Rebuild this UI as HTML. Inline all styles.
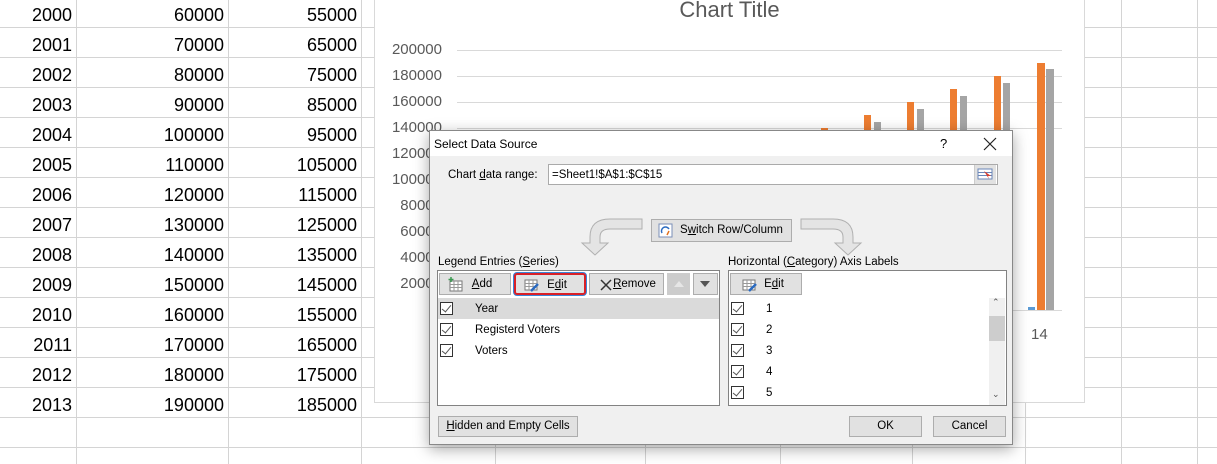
<!DOCTYPE html>
<html><head><style>
*{box-sizing:border-box;margin:0;padding:0}
body{width:1217px;height:464px;overflow:hidden;background:#fff;position:relative;font-family:"Liberation Sans",sans-serif}
.a{position:absolute}
.hl{position:absolute;height:1px;background:#d4d4d4}
.vl{position:absolute;width:1px;background:#d4d4d4}
.num{position:absolute;font-size:18px;color:#000;text-align:right;line-height:30px}
.dlg{font-size:11.5px;color:#000}
.btn{position:absolute;background:#e1e1e1;border:1px solid #adadad;font-size:11.5px;text-align:center;line-height:19px}
.cb{position:absolute;width:13px;height:13px;border:1px solid #333;background:#fff}
.cb:after{content:"";position:absolute;left:3px;top:0px;width:4px;height:8px;border-right:1.5px solid #555;border-bottom:1.5px solid #555;transform:rotate(40deg)}
.yl{position:absolute;font-size:15px;color:#595959;text-align:right;width:60px;left:382px}
</style></head><body>
<div class="hl" style="left:0;top:27px;width:1217px"></div>
<div class="hl" style="left:0;top:57px;width:1217px"></div>
<div class="hl" style="left:0;top:87px;width:1217px"></div>
<div class="hl" style="left:0;top:117px;width:1217px"></div>
<div class="hl" style="left:0;top:147px;width:1217px"></div>
<div class="hl" style="left:0;top:177px;width:1217px"></div>
<div class="hl" style="left:0;top:207px;width:1217px"></div>
<div class="hl" style="left:0;top:237px;width:1217px"></div>
<div class="hl" style="left:0;top:267px;width:1217px"></div>
<div class="hl" style="left:0;top:297px;width:1217px"></div>
<div class="hl" style="left:0;top:327px;width:1217px"></div>
<div class="hl" style="left:0;top:357px;width:1217px"></div>
<div class="hl" style="left:0;top:387px;width:1217px"></div>
<div class="hl" style="left:0;top:417px;width:1217px"></div>
<div class="hl" style="left:0;top:447px;width:1217px"></div>
<div class="vl" style="left:76px;top:0;height:464px"></div>
<div class="vl" style="left:228px;top:0;height:464px"></div>
<div class="vl" style="left:361px;top:0;height:464px"></div>
<div class="vl" style="left:495px;top:0;height:464px"></div>
<div class="vl" style="left:645px;top:0;height:464px"></div>
<div class="vl" style="left:780px;top:0;height:464px"></div>
<div class="vl" style="left:912px;top:0;height:464px"></div>
<div class="vl" style="left:1025px;top:0;height:464px"></div>
<div class="vl" style="left:1121px;top:0;height:464px"></div>
<div class="vl" style="left:1197px;top:0;height:464px"></div>
<div class="num" style="left:0;top:0;width:72px">2000<br>2001<br>2002<br>2003<br>2004<br>2005<br>2006<br>2007<br>2008<br>2009<br>2010<br>2011<br>2012<br>2013</div>
<div class="num" style="left:80px;top:0;width:144px">60000<br>70000<br>80000<br>90000<br>100000<br>110000<br>120000<br>130000<br>140000<br>150000<br>160000<br>170000<br>180000<br>190000</div>
<div class="num" style="left:232px;top:0;width:125px">55000<br>65000<br>75000<br>85000<br>95000<br>105000<br>115000<br>125000<br>135000<br>145000<br>155000<br>165000<br>175000<br>185000</div>
<div class="a" style="left:374px;top:-1px;width:711px;height:404px;background:#fff;border:1px solid #d9d9d9"></div>
<div class="a" style="left:374px;top:-3px;width:711px;text-align:center;font-size:22px;color:#595959">Chart Title</div>
<svg class="a" style="left:0;top:0" width="1217" height="464">
<g stroke="#d9d9d9" stroke-width="1">
<line x1="457" x2="1062" y1="50.5" y2="50.5"/><line x1="457" x2="1062" y1="76.5" y2="76.5"/><line x1="457" x2="1062" y1="102.5" y2="102.5"/><line x1="457" x2="1062" y1="128.5" y2="128.5"/>
<line x1="457" x2="1062" y1="310.5" y2="310.5"/></g>
<g fill="#ed7d31"><rect x="821" y="128" width="7" height="182"/><rect x="864" y="115" width="7" height="195"/><rect x="907" y="102" width="7" height="208"/><rect x="950" y="89" width="7" height="221"/><rect x="994" y="76" width="7" height="234"/><rect x="1037" y="63" width="8" height="247"/></g>
<g fill="#a5a5a5"><rect x="874" y="122" width="7" height="188"/><rect x="917" y="109" width="7" height="201"/><rect x="960" y="96" width="7" height="214"/><rect x="1003" y="83" width="7" height="227"/><rect x="1046" y="69" width="8" height="241"/></g>
<rect x="1028" y="307" width="7" height="3" fill="#5b9bd5"/>
</svg>
<div class="yl" style="top:41px">200000</div>
<div class="yl" style="top:67px">180000</div>
<div class="yl" style="top:93px">160000</div>
<div class="yl" style="top:119px">140000</div>
<div class="yl" style="top:145px">120000</div>
<div class="yl" style="top:171px">100000</div>
<div class="yl" style="top:197px">80000</div>
<div class="yl" style="top:223px">60000</div>
<div class="yl" style="top:249px">40000</div>
<div class="yl" style="top:275px">20000</div>
<div class="a" style="left:1031px;top:326px;font-size:15px;color:#595959">14</div>
<div class="a dlg" style="left:429px;top:130px;width:584px;height:315px;background:#f0f0f0;border:1px solid #888;box-shadow:0 4px 14px rgba(0,0,0,.35)">
<div class="a" style="left:0;top:0;width:582px;height:25px;background:#fff"></div>
<div class="a" style="left:4px;top:6px;font-size:12px">Select Data Source</div>
<div class="a" style="left:510px;top:5px;font-size:13px">?</div>
<svg class="a" style="left:553px;top:6px" width="14" height="14"><path d="M1 1L13 13M13 1L1 13" stroke="#222" stroke-width="1.2"/></svg>
<div class="a" style="left:18px;top:38px">Chart <u>d</u>ata range:</div>
<div class="a" style="left:118px;top:33px;width:450px;height:21px;background:#fff;border:1px solid #aaa"></div>
<div class="a" style="left:122px;top:38px">=Sheet1!$A$1:$C$15</div>
<div class="a" style="left:544px;top:34px;width:22px;height:19px;background:#e1e1e1;border-left:1px solid #ccc"><svg width="20" height="18"><rect x="3" y="4" width="14" height="10" fill="#fff" stroke="#6a86b8"/><line x1="3" y1="7.5" x2="17" y2="7.5" stroke="#6a86b8"/><line x1="3" y1="10.5" x2="17" y2="10.5" stroke="#6a86b8"/><path d="M9 6l7 5-3 0 1 3z" fill="#d83b2c"/></svg></div>
<svg class="a" style="left:150px;top:86px" width="290" height="40"><path d="M62 2H30Q10 2 10 20V26H2L15 38L28 26H20V20Q20 12 30 12H62Z" fill="#e4e4e4" stroke="#b0b0b0"/><path d="M221 2H253Q273 2 273 20V26H281L268 38L255 26H263V20Q263 12 253 12H221Z" fill="#e4e4e4" stroke="#b0b0b0"/></svg>
<div class="btn" style="left:221px;top:88px;width:141px;height:23px;line-height:21px;padding-left:20px">S<u>w</u>itch Row/Column</div>
<svg class="a" style="left:228px;top:92px" width="16" height="16"><rect x="1" y="1" width="13" height="13" fill="#fff" stroke="#7a8fb8"/><path d="M4 10A4 4 0 0 1 11 6" stroke="#2a6ac0" fill="none" stroke-width="1.5"/><path d="M11 8l-2 4" stroke="#e07020" stroke-width="1.5"/></svg>
<div class="a" style="left:8px;top:125px">Legend Entries (<u>S</u>eries)</div>
<div class="a" style="left:298px;top:125px">Horizontal (<u>C</u>ategory) Axis Labels</div>
<div class="a" style="left:7px;top:139px;width:283px;height:136px;background:#fff;border:1px solid #828282"></div>
<div class="a" style="left:298px;top:139px;width:279px;height:136px;background:#fff;border:1px solid #828282"></div>
<div class="btn" style="left:9px;top:142px;width:72px;height:22px;line-height:20px;padding-left:14px"><u>A</u>dd</div>
<div class="btn" style="left:84px;top:142px;width:72px;height:22px;line-height:20px;padding-left:14px;border:2px solid #d92027;border-radius:3px;box-shadow:0 0 0 1px #3a86d8">E<u>d</u>it</div>
<div class="btn" style="left:159px;top:142px;width:75px;height:22px;line-height:20px;padding-left:16px"><u>R</u>emove</div>
<div class="btn" style="left:237px;top:142px;width:23px;height:22px;background:#ccc;border-color:#ccc"></div>
<div class="btn" style="left:263px;top:142px;width:25px;height:22px"></div>
<svg class="a" style="left:18px;top:145px" width="180" height="18"><rect x="2" y="5" width="12" height="10" fill="#fff" stroke="#777"/><path d="M2 8.5H14M2 11.5H14M6 5V15M10 5V15" stroke="#999"/><path d="M3 1V6M0.5 3.5H5.5" stroke="#3a9a50" stroke-width="1.5"/>
<g transform="translate(75 0)"><rect x="2" y="4" width="12" height="10" fill="#fff" stroke="#777"/><path d="M2 7.5H14M2 10.5H14M6 4V14M10 4V14" stroke="#999"/><path d="M8 15L15 8" stroke="#2a6ac0" stroke-width="2.5"/></g>
<path d="M153 4L163 14M163 4L153 14" stroke="#333" stroke-width="1.5"/></svg>
<svg class="a" style="left:237px;top:142px" width="52" height="22"><path d="M7 14L12 8L17 14Z" fill="#e6e6e6"/><path d="M33 8L38 14L43 8Z" fill="#555"/></svg>
<div class="btn" style="left:300px;top:142px;width:72px;height:22px;line-height:20px;padding-left:16px">E<u>d</u>it</div>
<svg class="a" style="left:311px;top:145px" width="18" height="18"><rect x="2" y="4" width="12" height="10" fill="#fff" stroke="#777"/><path d="M2 7.5H14M2 10.5H14M6 4V14M10 4V14" stroke="#999"/><path d="M8 15L15 8" stroke="#2a6ac0" stroke-width="2.5"/></svg>
<div class="a" style="left:8px;top:167px;width:281px;height:21px;background:#dadada"></div>
<div class="cb" style="left:10px;top:171px"></div><div class="a" style="left:45px;top:172px">Year</div>
<div class="cb" style="left:10px;top:192px"></div><div class="a" style="left:45px;top:193px">Registerd Voters</div>
<div class="cb" style="left:10px;top:213px"></div><div class="a" style="left:45px;top:214px">Voters</div>
<div class="cb" style="left:301px;top:171px"></div><div class="a" style="left:336px;top:172px">1</div>
<div class="cb" style="left:301px;top:192px"></div><div class="a" style="left:336px;top:193px">2</div>
<div class="cb" style="left:301px;top:213px"></div><div class="a" style="left:336px;top:214px">3</div>
<div class="cb" style="left:301px;top:234px"></div><div class="a" style="left:336px;top:235px">4</div>
<div class="cb" style="left:301px;top:255px"></div><div class="a" style="left:336px;top:256px">5</div>
<div class="a" style="left:559px;top:167px;width:16px;height:107px;background:#f0f0f0"></div>
<div class="a" style="left:559px;top:185px;width:16px;height:25px;background:#cdcdcd"></div>
<div class="a" style="left:562px;top:166px;font-size:9px;color:#555">⌃</div>
<div class="a" style="left:562px;top:258px;font-size:9px;color:#555">⌄</div>
<div class="btn" style="left:8px;top:285px;width:140px;height:21px"><u>H</u>idden and Empty Cells</div>
<div class="btn" style="left:419px;top:285px;width:73px;height:21px">OK</div>
<div class="btn" style="left:503px;top:285px;width:73px;height:21px">Cancel</div>
</div>
</body></html>
